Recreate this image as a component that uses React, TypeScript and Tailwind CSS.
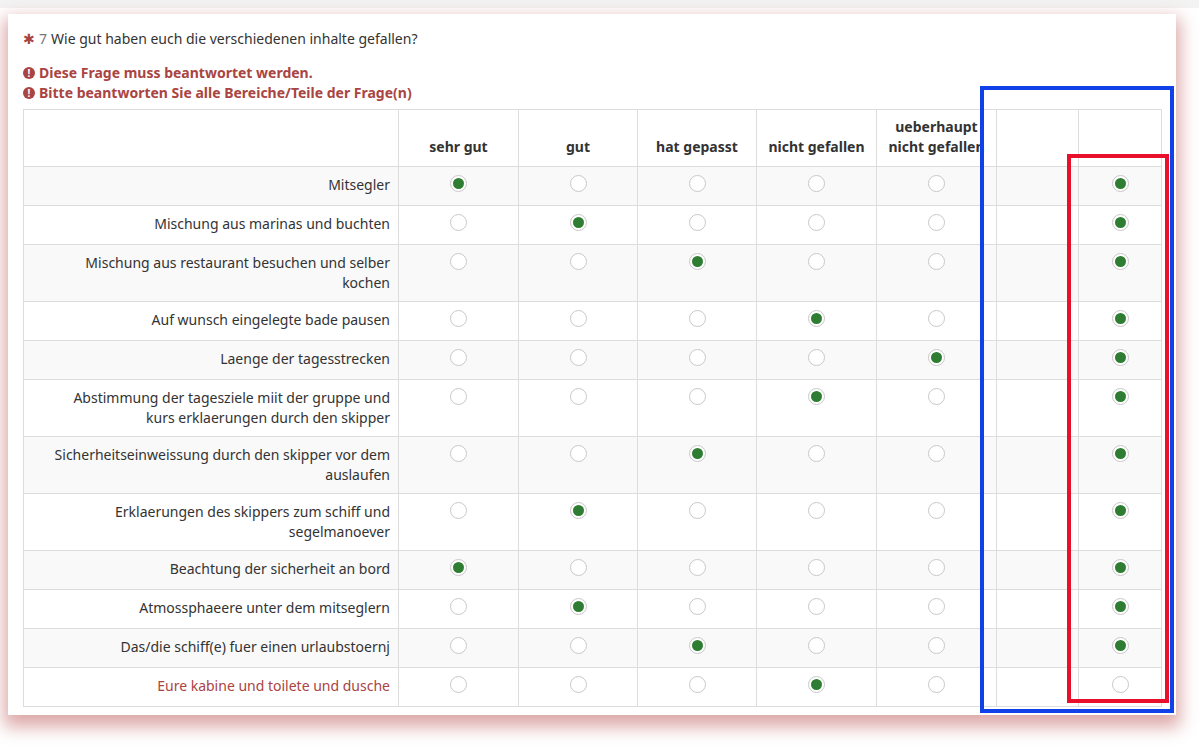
import React from "react";

const rows: [string, number, boolean][] = [
  ["Mitsegler", 0, false],
  ["Mischung aus marinas und buchten", 1, false],
  ["Mischung aus restaurant besuchen und selber kochen", 2, true],
  ["Auf wunsch eingelegte bade pausen", 3, false],
  ["Laenge der tagesstrecken", 4, false],
  ["Abstimmung der tagesziele miit der gruppe und kurs erklaerungen durch den skipper", 3, true],
  ["Sicherheitseinweissung durch den skipper vor dem auslaufen", 2, true],
  ["Erklaerungen des skippers zum schiff und segelmanoever", 1, true],
  ["Beachtung der sicherheit an bord", 0, false],
  ["Atmossphaeere unter dem mitseglern", 1, false],
  ["Das/die schiff(e) fuer einen urlaubstoernj", 2, false],
  ["Eure kabine und toilete und dusche", 3, false],
];
const heads = ["sehr gut", "gut", "hat gepasst", "nicht gefallen", "ueberhaupt nicht gefallen", "", ""];

function Radio({ on }: { on: boolean }) {
  return (
    <span className="w-[17px] h-[17px] rounded-full border border-[#c8c8c8] bg-white flex items-center justify-center">
      {on && <span className="w-[11px] h-[11px] rounded-full bg-[#2e7d32]" />}
    </span>
  );
}

const cols = "grid grid-cols-[375px_120px_119px_119px_120px_120px_82px_83px]";

export default function App() {
  return (
    <div className="w-[1199px] h-[747px] bg-white relative overflow-hidden" style={{ fontFamily: '"Noto Sans", "Open Sans", sans-serif' }}>
      <div className="h-[8px] bg-[#f3f3f3]" />
      <div className="absolute left-[8px] top-[14px] w-[1168px] h-[701px] bg-white shadow-[0_8px_16px_4px_rgba(170,40,40,0.4)] pt-[14px] pl-[15px]">
        <div className="text-[14px] text-[#333] flex items-center gap-1 h-[20px]">
          <span className="text-[#a94442] text-[14px]">✱</span>
          <span className="text-[#777]">7</span>
          <span>Wie gut haben euch die verschiedenen inhalte gefallen?</span>
        </div>
        <div className="mt-[15px] text-[14px] font-bold text-[#a94442] leading-[20px]">
          <div className="flex items-center gap-1"><span className="w-[12px] h-[12px] rounded-full bg-[#a94442] text-white text-[10px] leading-[12px] text-center">!</span>Diese Frage muss beantwortet werden.</div>
          <div className="flex items-center gap-1"><span className="w-[12px] h-[12px] rounded-full bg-[#a94442] text-white text-[10px] leading-[12px] text-center">!</span>Bitte beantworten Sie alle Bereiche/Teile der Frage(n)</div>
        </div>
        <div className="mt-[6px] w-[1139px] border-l border-t border-[#ddd] text-[14px] text-[#333]">
          <div className={cols + " h-[57px]"}>
            <div className="border-r border-b border-[#ddd]" />
            {heads.map((h, i) => (
              <div key={i} className="border-r border-b border-[#ddd] flex items-end justify-center pb-[9px] font-bold text-center leading-[20px] whitespace-nowrap overflow-hidden">
                {i === 4 ? <span>ueberhaupt<br />nicht gefallen</span> : h}
              </div>
            ))}
          </div>
          {rows.map(([label, sel, tall], r) => (
            <div key={r} className={cols + (tall ? " h-[57px]" : " h-[39px]") + (r % 2 === 0 ? " bg-[#f9f9f9]" : " bg-white")}>
              <div className={"border-r border-b border-[#ddd] text-right pr-[8px] pl-[30px] pt-[8px] leading-[20px] " + (r === 11 ? "text-[#a94442]" : "")}>{label}</div>
              {[0, 1, 2, 3, 4, 5, 6].map((c) => (
                <div key={c} className="border-r border-b border-[#ddd] flex justify-center pt-[8px]">
                  {c === 5 ? null : <Radio on={c === 6 ? r !== 11 : c === sel} />}
                </div>
              ))}
            </div>
          ))}
        </div>
      </div>
      <div className="absolute left-[980px] top-[86px] w-[194px] h-[627px] border-[4px] border-[#1040e8]" />
      <div className="absolute left-[1067px] top-[154px] w-[102px] h-[549px] border-[4px] border-[#e8102a]" />
    </div>
  );
}
